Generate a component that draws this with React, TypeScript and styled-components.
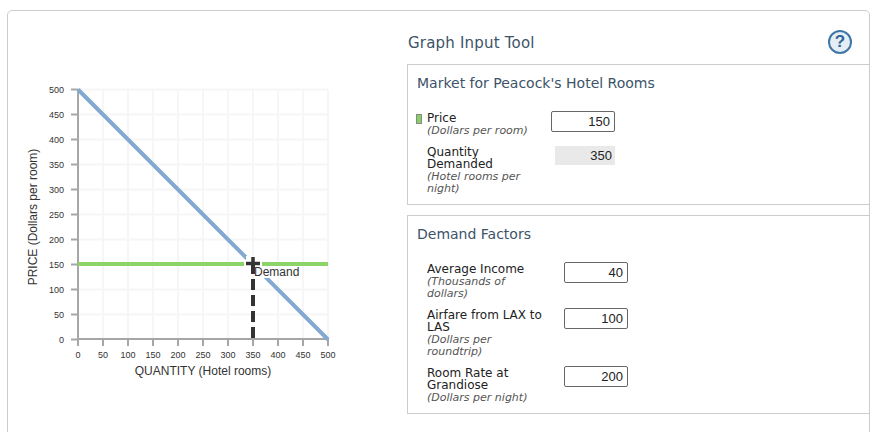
import React from 'react'
import styled, { createGlobalStyle } from 'styled-components'

const GlobalStyle = createGlobalStyle`
  html, body {
    margin: 0;
    height: 432px;
    overflow: hidden;
    background: #fff;
  }
`

const Frame = styled.div`
  box-sizing: border-box;
  margin: 10px 0 0 7px;
  width: 863px;
  height: 440px;
  border: 1px solid #ccc;
  border-radius: 5px;
  display: flex;
`

const Chart = styled.svg`
  display: block;
  flex: none;
  width: 399px;
  height: 400px;
`

const ToolColumn = styled.div`
  flex: 1;
  min-width: 0;
  font-family: "DejaVu Sans", Verdana, sans-serif;
`

const ToolHeader = styled.div`
  height: 53px;
  display: flex;
  align-items: center;
  justify-content: space-between;
  padding: 9px 17px 0 1px;
  box-sizing: border-box;
`

const ToolTitle = styled.h2`
  margin: 2px 0 0;
  font-size: 15px;
  letter-spacing: 0.2px;
  font-weight: normal;
  color: #3c5368;
`

const HelpButton = styled.div`
  box-sizing: border-box;
  width: 24px;
  height: 24px;
  border-radius: 50%;
  border: 2px solid #3f76a8;
  background: #e6eef5;
  color: #2f6496;
  font: bold 17px/20px "Liberation Sans", Arial, sans-serif;
  text-align: center;
`

const Panel = styled.section<{ $height: number; $gap?: number }>`
  box-sizing: border-box;
  height: ${p => p.$height}px;
  margin-top: ${p => p.$gap ?? 0}px;
  border: 1px solid #ccc;
  border-right: 0;
  padding: 9px 0 0 9px;
`

const PanelTitle = styled.h3<{ $after: number }>`
  margin: 0 0 ${p => p.$after}px;
  font-size: 14px;
  line-height: 18px;
  font-weight: normal;
  color: #3c5368;
`

const Row = styled.div<{ $labelWidth: number; $height: number }>`
  display: grid;
  grid-template-columns: 10px ${p => p.$labelWidth}px 64px;
  height: ${p => p.$height}px;
`

const LabelCell = styled.div`
  padding-top: 1px;
`

const Marker = styled.span`
  box-sizing: border-box;
  width: 6px;
  height: 10px;
  margin: 3px 0 0 -1px;
  background: #83d064;
  border: 1px solid #888;
`

const Label = styled.div`
  font-size: 12px;
  line-height: 12px;
  color: #222;
`

const Unit = styled.div`
  margin-top: 1px;
  font-size: 11px;
  line-height: 12px;
  font-style: italic;
  color: #555;
`

const ValueInput = styled.input`
  box-sizing: border-box;
  width: 64px;
  height: 21px;
  padding: 0 4px 0 0;
  border: 1px solid #666;
  border-radius: 2px;
  background: #fff;
  text-align: right;
  font: 13px "Liberation Sans", Arial, sans-serif;
  color: #222;
`

const ValueOutput = styled.div`
  width: 60px;
  height: 19px;
  margin: 1px 0 0 4px;
  padding-right: 3px;
  box-sizing: border-box;
  background: #e9e9e9;
  text-align: right;
  font: 13px/19px "Liberation Sans", Arial, sans-serif;
  color: #222;
`

const ticks = [0, 50, 100, 150, 200, 250, 300, 350, 400, 450, 500]
const toX = (q: number) => 78 + q * 0.5
const toY = (p: number) => 339.5 - p * 0.5

const AxisText = styled.text`
  font-family: "Liberation Sans", Arial, sans-serif;
  fill: #333;
`

function PriceChart() {
  return (
    <Chart viewBox="8 11 399 400">
      {ticks.slice(1).map(t => (
        <g key={t} stroke="#f6f6f6" strokeWidth="2">
          <line x1={toX(t)} y1={90} x2={toX(t)} y2={339} />
          <line x1={78} y1={toY(t)} x2={328} y2={toY(t)} />
        </g>
      ))}
      <g stroke="#a6a6a6" strokeWidth="2">
        <line x1={78} y1={89} x2={78} y2={340} />
        <line x1={78} y1={339} x2={329} y2={339} />
        {ticks.map(t => (
          <g key={t}>
            <line x1={71} y1={toY(t)} x2={78} y2={toY(t)} />
            <line x1={toX(t)} y1={339} x2={toX(t)} y2={346} />
          </g>
        ))}
      </g>
      {ticks.map(t => (
        <g key={t}>
          <AxisText x={64} y={toY(t) + 3.5} fontSize="9" textAnchor="end">{t}</AxisText>
          <AxisText x={toX(t)} y={358} fontSize="9" textAnchor="middle">{t}</AxisText>
        </g>
      ))}
      <AxisText x={203} y={375} fontSize="12" textAnchor="middle">QUANTITY (Hotel rooms)</AxisText>
      <AxisText
        transform="translate(37 217) rotate(-90)"
        fontSize="12"
        textAnchor="middle"
      >
        PRICE (Dollars per room)
      </AxisText>
      <line x1={78} y1={89.5} x2={328} y2={339.5} stroke="#82a9d2" strokeWidth="4" />
      <line x1={78} y1={264} x2={328} y2={264} stroke="#8ad468" strokeWidth="4" />
      {/* white halo round the crosshair and behind the curve label */}
      <rect x={244} y={262} width={18} height={4} fill="#fff" />
      <rect x={246} y={256} width={14} height={10} fill="#fff" />
      <rect x={254} y={266} width={46} height={12} fill="#fff" />
      <line x1={253} y1={338} x2={253} y2={264} stroke="#333" strokeWidth="4" strokeDasharray="11 5" />
      <path d="M246 263.5H260M253 257V270" stroke="#333" strokeWidth="3.5" fill="none" />
      <AxisText x={254} y={276} fontSize="12">Demand</AxisText>
    </Chart>
  )
}

export default function App() {
  return (
    <>
      <GlobalStyle />
      <Frame>
        <PriceChart />
        <ToolColumn>
          <ToolHeader>
            <ToolTitle>Graph Input Tool</ToolTitle>
            <HelpButton>?</HelpButton>
          </ToolHeader>
          <Panel $height={141}>
            <PanelTitle $after={19}>Market for Peacock's Hotel Rooms</PanelTitle>
            <Row $labelWidth={124} $height={34}>
              <Marker />
              <LabelCell>
                <Label>Price</Label>
                <Unit>(Dollars per room)</Unit>
              </LabelCell>
              <ValueInput defaultValue="150" />
            </Row>
            <Row $labelWidth={124} $height={60}>
              <span />
              <LabelCell>
                <Label>Quantity<br />Demanded</Label>
                <Unit>(Hotel rooms per<br />night)</Unit>
              </LabelCell>
              <ValueOutput>350</ValueOutput>
            </Row>
          </Panel>
          <Panel $height={199} $gap={10}>
            <PanelTitle $after={19}>Demand Factors</PanelTitle>
            <Row $labelWidth={137} $height={46}>
              <span />
              <LabelCell>
                <Label>Average Income</Label>
                <Unit>(Thousands of<br />dollars)</Unit>
              </LabelCell>
              <ValueInput defaultValue="40" />
            </Row>
            <Row $labelWidth={137} $height={58}>
              <span />
              <LabelCell>
                <Label>Airfare from LAX to<br />LAS</Label>
                <Unit>(Dollars per<br />roundtrip)</Unit>
              </LabelCell>
              <ValueInput defaultValue="100" />
            </Row>
            <Row $labelWidth={137} $height={40}>
              <span />
              <LabelCell>
                <Label>Room Rate at<br />Grandiose</Label>
                <Unit>(Dollars per night)</Unit>
              </LabelCell>
              <ValueInput defaultValue="200" />
            </Row>
          </Panel>
        </ToolColumn>
      </Frame>
    </>
  )
}
